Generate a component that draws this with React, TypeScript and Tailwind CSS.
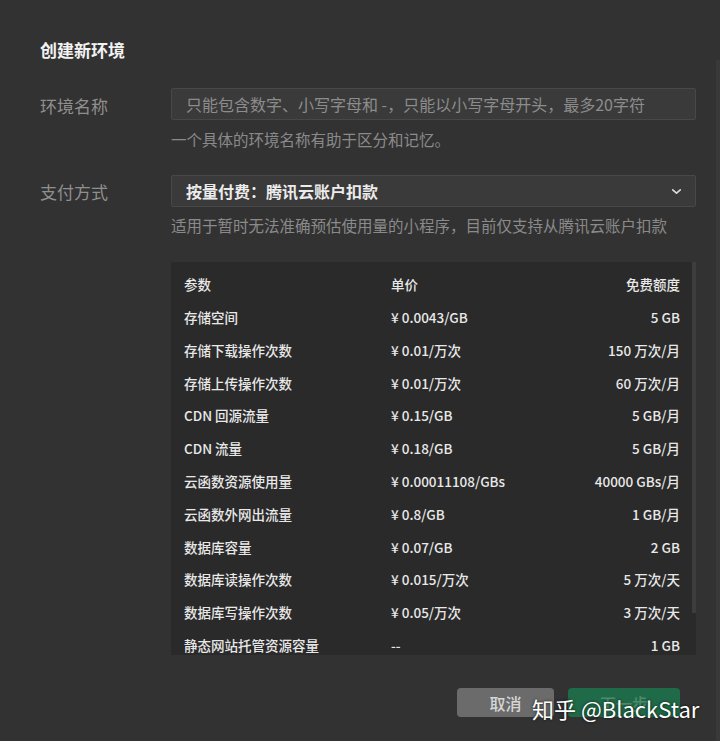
const ROWS: [string, string, string][] = [
  ['存储空间', '¥ 0.0043/GB', '5 GB'],
  ['存储下载操作次数', '¥ 0.01/万次', '150 万次/月'],
  ['存储上传操作次数', '¥ 0.01/万次', '60 万次/月'],
  ['CDN 回源流量', '¥ 0.15/GB', '5 GB/月'],
  ['CDN 流量', '¥ 0.18/GB', '5 GB/月'],
  ['云函数资源使用量', '¥ 0.00011108/GBs', '40000 GBs/月'],
  ['云函数外网出流量', '¥ 0.8/GB', '1 GB/月'],
  ['数据库容量', '¥ 0.07/GB', '2 GB'],
  ['数据库读操作次数', '¥ 0.015/万次', '5 万次/天'],
  ['数据库写操作次数', '¥ 0.05/万次', '3 万次/天'],
  ['静态网站托管资源容量', '--', '1 GB'],
];

function Row({ cells }: { cells: [string, string, string] }) {
  return (
    <div className="grid grid-cols-[207px_1fr_auto] h-[32.8px] items-center text-[13.5px] font-medium text-[#e8e8e8]">
      <span>{cells[0]}</span>
      <span>{cells[1]}</span>
      <span className="text-right">{cells[2]}</span>
    </div>
  );
}

export default function App() {
  return (
    <div className="relative w-[720px] h-[741px] overflow-hidden bg-[#323232] font-['Noto_Sans_CJK_SC','Noto_Sans',sans-serif]">
      <div className="pl-[40px] pr-[24px] pt-[38px]">
        <h1 className="text-[17px] leading-[24px] font-bold text-[#f2f2f2]">创建新环境</h1>

        {/* 环境名称 */}
        <div className="mt-[26px] grid grid-cols-[131px_525px]">
          <label className="text-[17px] leading-[32px] pt-[2px] text-[#8f8f8f]">环境名称</label>
          <div>
            <div className="h-[32px] rounded-[2px] border border-[#484848] bg-[#3a3a3a] pl-[14px] flex items-center text-[16px] text-[#8c8c8c]">
              只能包含数字、小写字母和 -，只能以小写字母开头，最多20字符
            </div>
            <p className="mt-[8px] text-[15.5px] leading-[22px] text-[#8a8a8a]">一个具体的环境名称有助于区分和记忆。</p>
          </div>
        </div>

        {/* 支付方式 */}
        <div className="mt-[25px] grid grid-cols-[131px_525px]">
          <label className="text-[17px] leading-[32px] pt-[1px] text-[#8f8f8f]">支付方式</label>
          <div>
            <div className="h-[32px] rounded-[2px] border border-[#484848] bg-[#3a3a3a] pl-[14px] pr-[12px] flex items-center justify-between">
              <span className="text-[16px] font-bold text-[#ececec]">按量付费：腾讯云账户扣款</span>
              <svg width="13" height="13" viewBox="0 0 24 24" fill="none" stroke="#dcdcdc" strokeWidth={3} strokeLinecap="round" strokeLinejoin="round">
                <path d="M5 9l7 6 7-6" />
              </svg>
            </div>
            <p className="mt-[7px] text-[15.5px] leading-[22px] text-[#8a8a8a]">适用于暂时无法准确预估使用量的小程序，目前仅支持从腾讯云账户扣款</p>

            <div className="relative mt-[26px] h-[393px] overflow-hidden bg-[#2a2a2a] pl-[13px] pr-[16px] pt-[6px]">
              <Row cells={['参数', '单价', '免费额度']} />
              {ROWS.map((r) => (
                <Row key={r[0]} cells={r} />
              ))}
              {/* table scrollbar */}
              <div className="absolute right-0 top-0 w-[4px] h-[351px] bg-[#3d3d3d]" />
            </div>

            <div className="mt-[33px] flex justify-end gap-[14px] pr-[16px]">
              <button className="w-[97px] h-[29px] rounded-[4px] bg-[#6b6b6b] text-[16px] font-medium text-[#d6d6d6]">取消</button>
              <button className="w-[112px] h-[29px] rounded-[4px] bg-[#1f6a48] text-[16px] font-medium text-[#4f8a6d]">下一步</button>
            </div>
          </div>
        </div>
      </div>

      {/* outer scrollbar strip */}
      <div className="absolute right-0 top-[60px] bottom-0 w-[4px] bg-[#393939]" />

      {/* watermark */}
      <div className="absolute left-[532px] top-[693px] text-[22px] leading-[30px] text-white [text-shadow:0_0_3px_rgba(0,0,0,0.8)] font-['Noto_Sans_CJK_SC','Noto_Sans',sans-serif]">
        知乎 @BlackStar
      </div>
    </div>
  );
}
